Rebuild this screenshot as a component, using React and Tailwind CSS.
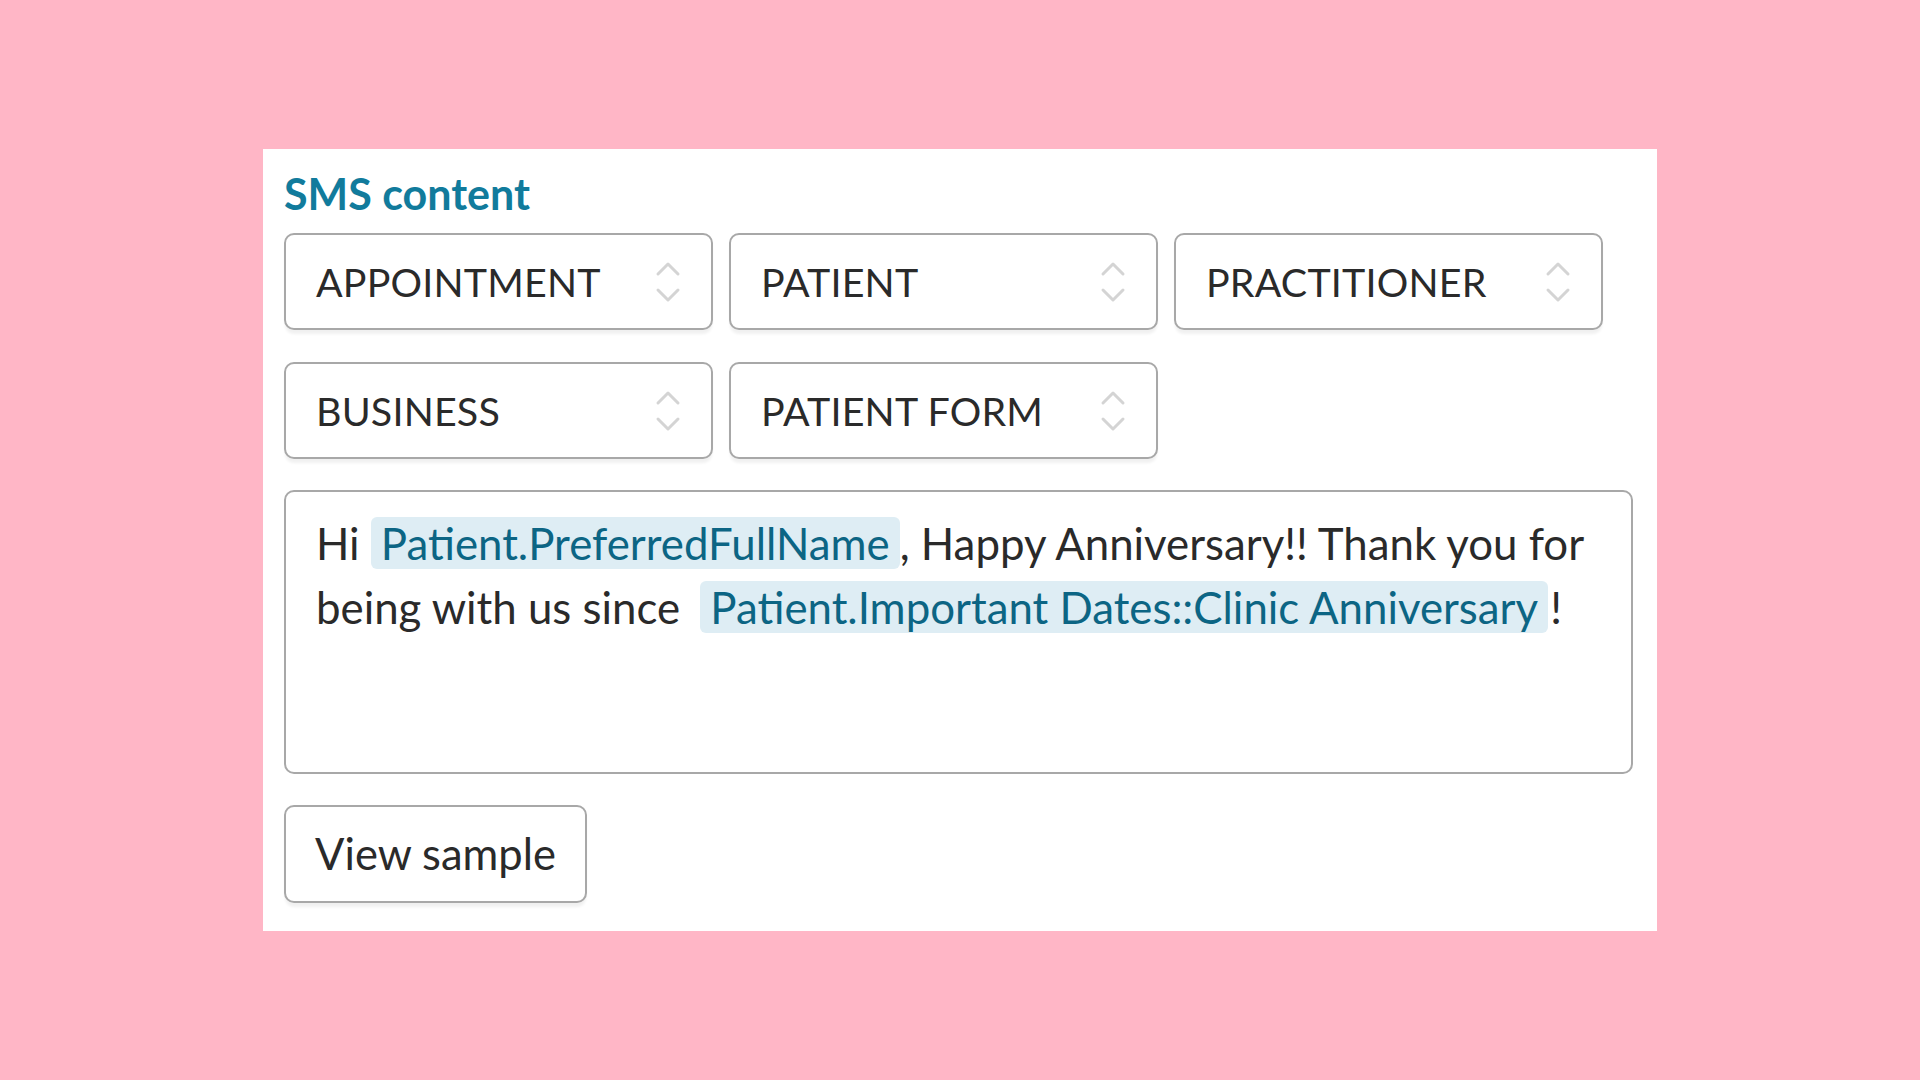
import React from "react";

function Chevrons() {
  return (
    <svg width="26" height="44" viewBox="0 0 26 44" className="shrink-0" aria-hidden="true">
      <polyline points="3,14 13,4 23,14" fill="none" stroke="#d4d4d4" strokeWidth="3" strokeLinecap="round" strokeLinejoin="round" />
      <polyline points="3,30 13,40 23,30" fill="none" stroke="#d4d4d4" strokeWidth="3" strokeLinecap="round" strokeLinejoin="round" />
    </svg>
  );
}

function SelectBox({ label }) {
  return (
    <div className="h-[97px] flex items-center justify-between border-2 border-[#a8a8a8] rounded-[10px] bg-white pl-[30px] pr-[30px] shadow-[0_5px_3px_-1px_rgba(0,0,0,0.06)]">
      <span className="text-[39.4px] leading-none text-[#2a2a2a] tracking-[0.2px]">{label}</span>
      <Chevrons />
    </div>
  );
}

function Tag({ children, className = "" }) {
  return (
    <span className={"bg-[#deedf4] text-[#0c6584] rounded-[6px] px-[10px] py-0 " + className}>{children}</span>
  );
}

export default function App() {
  return (
    <div className="min-h-screen w-full bg-[#ffb6c6] pt-[149px] pl-[263px] font-['Lato','Noto_Sans',sans-serif]">
      <div className="w-[1394px] h-[782px] bg-white pl-[21px] pr-[24px] pt-[21px]">
        <h2 className="text-[43px] leading-[48px] font-bold text-[#117b9c]">SMS content</h2>
        <div className="mt-[15px] grid grid-cols-[429px_429px_429px] gap-x-[16px] gap-y-[32px]">
          <SelectBox label="APPOINTMENT" />
          <SelectBox label="PATIENT" />
          <SelectBox label="PRACTITIONER" />
          <SelectBox label="BUSINESS" />
          <SelectBox label="PATIENT FORM" />
        </div>
        <div className="mt-[31px] h-[284px] border-2 border-[#a8a8a8] rounded-[10px] pl-[30px] pr-[20px] pt-[19px] text-[43.8px] leading-[64px] text-[#2a2a2a]">
          Hi <Tag>Patient.PreferredFullName</Tag>, Happy Anniversary!! Thank you for
          <br />
          being with us since <Tag className="ml-[9px]">Patient.Important Dates::Clinic Anniversary</Tag>
          <span className="ml-[2px]">!</span>
        </div>
        <button className="mt-[31px] h-[98px] px-[29px] border-2 border-[#a8a8a8] rounded-[10px] bg-white text-[43.5px] leading-none text-[#2a2a2a] shadow-[0_5px_3px_-1px_rgba(0,0,0,0.06)]">
          View sample
        </button>
      </div>
    </div>
  );
}
